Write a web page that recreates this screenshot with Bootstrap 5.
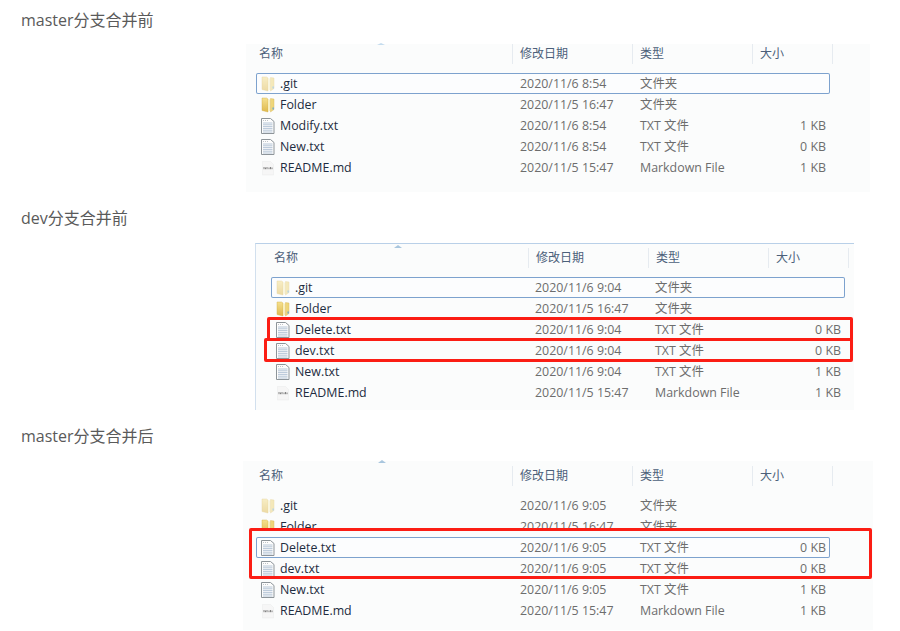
<!doctype html>
<html lang="zh">
<head>
<meta charset="utf-8">
<link rel="stylesheet" href="https://cdn.jsdelivr.net/npm/bootstrap@5.3.0/dist/css/bootstrap.min.css">
<style>
body{background:#fff;font-family:"Open Sans","Noto Sans CJK SC",sans-serif;margin:0;height:631px;overflow:hidden}
.sheet{padding-top:10px}
.caption{margin:0 0 0 21px;height:20px;font-size:16px;line-height:20px;color:#5a5a5a}
.explorer{background:#fbfcfc;position:relative;font-size:12.4px;line-height:21px;color:#6d6d6d}
.ex-a{margin:14px 0 0 246px;width:624px;height:148px;padding:0 0 0 10px}
.ex-b{margin:15px 0 0 255px;width:599px;height:167px;padding:0 0 0 15px;border-top:1px solid #b9d0e8;border-left:1px solid #d2e0ee}
.ex-c{margin:15px 0 0 243px;width:630px;height:169px;padding:5px 0 0 13px}
.hd{height:20px;line-height:20px;color:#4c607a;font-size:12px}
.hd>div{border-right:1px solid #e6ebf0;padding-left:7px}
.ex-a .hd{margin-bottom:9px}
.ex-b .hd{margin-top:4px;margin-bottom:9px}
.ex-c .hd{margin-bottom:9px}
.c-n{width:257px;flex:none}.c-d{width:120px;flex:none}.c-t{width:120px;flex:none}.c-s{width:80px;flex:none}
.ex-b .hd .c-n{width:258px}
.hd .c-n{padding-left:3px}
.rw{height:21px;width:574px}
.rw .c-n{color:#1e2c40;display:flex;align-items:center;gap:4px;padding-left:4px}
.rw .c-d,.rw .c-t{padding-left:7px}
.rw .c-s{text-align:right;width:73px}
.rw svg{flex:none;width:16px;height:16px}
.sel{box-shadow:inset 0 0 0 1px #7da2ce;border-radius:2px;background:#fcfdfe}
.clipped{height:15px;margin-bottom:6px;overflow:hidden;align-items:flex-start}
.clipped>div{height:21px}
.faded svg{opacity:.5}
.sort{position:absolute;width:0;height:0;border-left:4px solid transparent;border-right:4px solid transparent;border-bottom:3px solid #a9c6de}
.ex-a .sort{left:131px;top:-1px;border-bottom-width:2px;border-bottom-color:#c5dcee}
.ex-b .sort{left:138px;top:1px}
.ex-c .sort{left:135px;top:-1px}
.mark-red{position:absolute;border:3px solid #fb1d14;border-radius:2px;pointer-events:none}
.m1{left:11px;top:73px;width:586px;height:24px}
.m2{left:8px;top:94px;width:589px;height:24px}
.m3{left:6px;top:67px;width:623px;height:51px}
</style>
</head>
<body>
<svg width="0" height="0" class="d-block" aria-hidden="true">
<defs>
<linearGradient id="fy" x1="0" y1="0" x2="0" y2="1"><stop offset="0" stop-color="#f5e08e"/><stop offset="1" stop-color="#dfb94e"/></linearGradient>
<symbol id="i-folder" viewBox="0 0 16 16">
<path d="M2 1h4.500l1.500 1v13l-6-1.500z" fill="url(#fy)" stroke="#d2ad45" stroke-width=".4"/>
<path d="M8 2.500h2.500V14H8z" fill="#f8efc0"/>
<path d="M10.500 1.500l3.500.5v10.500L10.500 15z" fill="#eed67a" stroke="#d6b350" stroke-width=".4"/>
<path d="M12.500 10.500h1.300v2h-1.300z" fill="#62a6dc"/>
</symbol>
<symbol id="i-txt" viewBox="0 0 16 16">
<path d="M1.500.5h9l3.500 3v12H1.500z" fill="#fdfdfd" stroke="#8d9499"/>
<path d="M3 5h9.500M3 6.800h9.500M3 8.600h9.500M3 10.400h9.500M3 12.200h9.500M3 14h9.500" stroke="#aec0d3" stroke-width=".9"/>
<path d="M3 2.500h6" stroke="#c0c4c8" stroke-dasharray="1 1"/>
</symbol>
<symbol id="i-md" viewBox="0 0 16 16">
<path d="M2.500 1.500h8l3 3V15h-11z" fill="#f6f6f6" stroke="#ececec" stroke-width=".6"/>
<path d="M4 7v2.200M5.500 7.500v1.700M7 7v2.200M9 7.500v1.700M10.500 7v2.200M12 7.500v1.700" stroke="#666" stroke-width=".8"/>
</symbol>
</defs>
</svg>
<main class="sheet">
<h2 class="caption fw-normal">master分支合并前</h2>
<section class="explorer ex-a">
  <i class="sort"></i>
  <div class="hd d-flex"><div class="c-n">名称</div><div class="c-d">修改日期</div><div class="c-t">类型</div><div class="c-s">大小</div></div>
  <div class="rw d-flex sel faded"><div class="c-n"><svg><use href="#i-folder"/></svg>.git</div><div class="c-d">2020/11/6 8:54</div><div class="c-t">文件夹</div><div class="c-s"></div></div>
  <div class="rw d-flex"><div class="c-n"><svg><use href="#i-folder"/></svg>Folder</div><div class="c-d">2020/11/5 16:47</div><div class="c-t">文件夹</div><div class="c-s"></div></div>
  <div class="rw d-flex"><div class="c-n"><svg><use href="#i-txt"/></svg>Modify.txt</div><div class="c-d">2020/11/6 8:54</div><div class="c-t">TXT 文件</div><div class="c-s">1 KB</div></div>
  <div class="rw d-flex"><div class="c-n"><svg><use href="#i-txt"/></svg>New.txt</div><div class="c-d">2020/11/6 8:54</div><div class="c-t">TXT 文件</div><div class="c-s">0 KB</div></div>
  <div class="rw d-flex"><div class="c-n"><svg><use href="#i-md"/></svg>README.md</div><div class="c-d">2020/11/5 15:47</div><div class="c-t">Markdown File</div><div class="c-s">1 KB</div></div>
</section>
<h2 class="caption fw-normal mt-3">dev分支合并前</h2>
<section class="explorer ex-b">
  <i class="sort"></i>
  <div class="hd d-flex"><div class="c-n">名称</div><div class="c-d">修改日期</div><div class="c-t">类型</div><div class="c-s">大小</div></div>
  <div class="rw d-flex sel faded"><div class="c-n"><svg><use href="#i-folder"/></svg>.git</div><div class="c-d">2020/11/6 9:04</div><div class="c-t">文件夹</div><div class="c-s"></div></div>
  <div class="rw d-flex"><div class="c-n"><svg><use href="#i-folder"/></svg>Folder</div><div class="c-d">2020/11/5 16:47</div><div class="c-t">文件夹</div><div class="c-s"></div></div>
  <div class="rw d-flex"><div class="c-n"><svg><use href="#i-txt"/></svg>Delete.txt</div><div class="c-d">2020/11/6 9:04</div><div class="c-t">TXT 文件</div><div class="c-s">0 KB</div></div>
  <div class="rw d-flex"><div class="c-n"><svg><use href="#i-txt"/></svg>dev.txt</div><div class="c-d">2020/11/6 9:04</div><div class="c-t">TXT 文件</div><div class="c-s">0 KB</div></div>
  <div class="rw d-flex"><div class="c-n"><svg><use href="#i-txt"/></svg>New.txt</div><div class="c-d">2020/11/6 9:04</div><div class="c-t">TXT 文件</div><div class="c-s">1 KB</div></div>
  <div class="rw d-flex"><div class="c-n"><svg><use href="#i-md"/></svg>README.md</div><div class="c-d">2020/11/5 15:47</div><div class="c-t">Markdown File</div><div class="c-s">1 KB</div></div>
  <div class="mark-red m1"></div>
  <div class="mark-red m2"></div>
</section>
<h2 class="caption fw-normal mt-3">master分支合并后</h2>
<section class="explorer ex-c">
  <i class="sort"></i>
  <div class="hd d-flex"><div class="c-n">名称</div><div class="c-d">修改日期</div><div class="c-t">类型</div><div class="c-s">大小</div></div>
  <div class="rw d-flex faded"><div class="c-n"><svg><use href="#i-folder"/></svg>.git</div><div class="c-d">2020/11/6 9:05</div><div class="c-t">文件夹</div><div class="c-s"></div></div>
  <div class="rw d-flex clipped"><div class="c-n"><svg><use href="#i-folder"/></svg>Folder</div><div class="c-d">2020/11/5 16:47</div><div class="c-t">文件夹</div><div class="c-s"></div></div>
  <div class="rw d-flex sel"><div class="c-n"><svg><use href="#i-txt"/></svg>Delete.txt</div><div class="c-d">2020/11/6 9:05</div><div class="c-t">TXT 文件</div><div class="c-s">0 KB</div></div>
  <div class="rw d-flex"><div class="c-n"><svg><use href="#i-txt"/></svg>dev.txt</div><div class="c-d">2020/11/6 9:05</div><div class="c-t">TXT 文件</div><div class="c-s">0 KB</div></div>
  <div class="rw d-flex"><div class="c-n"><svg><use href="#i-txt"/></svg>New.txt</div><div class="c-d">2020/11/6 9:05</div><div class="c-t">TXT 文件</div><div class="c-s">1 KB</div></div>
  <div class="rw d-flex"><div class="c-n"><svg><use href="#i-md"/></svg>README.md</div><div class="c-d">2020/11/5 15:47</div><div class="c-t">Markdown File</div><div class="c-s">1 KB</div></div>
  <div class="mark-red m3"></div>
</section>
</main>
<script src="https://cdn.jsdelivr.net/npm/bootstrap@5.3.0/dist/js/bootstrap.bundle.min.js"></script>
</body>
</html>
